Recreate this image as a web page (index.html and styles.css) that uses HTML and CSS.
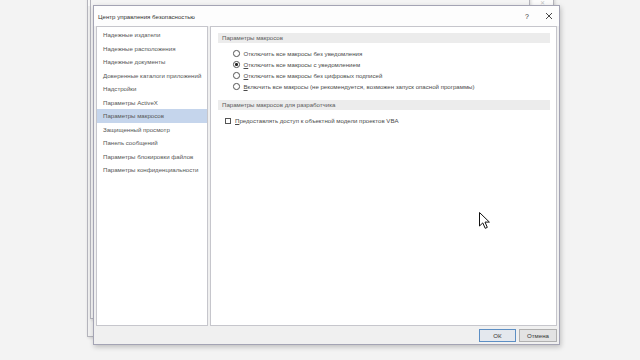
FILE: index.html
```html
<!DOCTYPE html>
<html lang="ru">

<head>
    <meta charset="UTF-8">
    <title>Центр управления безопасностью</title>
    <link rel="stylesheet" href="styles.css">
</head>

<body>
    <div class="desk">
        <!-- окна позади диалога -->
        <div class="win win-back1">
            <div class="win-title">
                <span class="win-name">Параметры Word</span>
                <span class="win-btns"><span>?</span><span>✕</span></span>
            </div>
        </div>
        <div class="win win-back2"></div>

        <div class="dialog">
            <div class="titlebar">
                <span class="title">Центр управления безопасностью</span>
                <span class="help">?</span>
                <span class="close">
                    <svg width="8" height="8" viewBox="0 0 8 8"><path d="M1 1 L7 7 M7 1 L1 7" stroke="#333" stroke-width="0.9" fill="none"/></svg>
                </span>
            </div>

            <div class="body">
                <ul class="nav">
                    <li>Надежные издатели</li>
                    <li>Надежные расположения</li>
                    <li>Надежные документы</li>
                    <li>Доверенные каталоги приложений</li>
                    <li>Надстройки</li>
                    <li>Параметры ActiveX</li>
                    <li class="active">Параметры макросов</li>
                    <li>Защищенный просмотр</li>
                    <li>Панель сообщений</li>
                    <li>Параметры блокировки файлов</li>
                    <li>Параметры конфиденциальности</li>
                </ul>

                <div class="pane">
                    <div class="group-head">Параметры макросов</div>
                    <div class="options">
                        <div class="opt"><span class="radio"></span>Отключить все макросы без уведомления</div>
                        <div class="opt"><span class="radio checked"></span><span><u>О</u>тключить все макросы с уведомлением</span></div>
                        <div class="opt"><span class="radio"></span><span><u>О</u>тключить все макросы без цифровых подписей</span></div>
                        <div class="opt"><span class="radio"></span><span><u>В</u>ключить все макросы (не рекомендуется, возможен запуск опасной программы)</span></div>
                    </div>

                    <div class="group-head group-dev">Параметры макросов для разработчика</div>
                    <div class="check-row"><span class="check"></span><span><u>П</u>редоставлять доступ к объектной модели проектов VBA</span></div>
                </div>
            </div>

            <div class="footer">
                <button class="btn btn-ok">ОК</button>
                <button class="btn">Отмена</button>
            </div>
        </div>

        <svg class="cursor" width="12" height="18" viewBox="0 0 12 18">
            <path d="M0.5 0.5 V14 L3.8 10.9 L6.2 16.3 L8.3 15.4 L6 10.1 H10.4 Z" fill="#fff" stroke="#111" stroke-width="1" stroke-linejoin="round"/>
        </svg>
    </div>
</body>

</html>
```

FILE: styles.css
```css
body {
    margin: 0;
    padding: 0;
    font-family: "Liberation Sans", Arial, sans-serif;
    background-color: #f3f3f3;
    color: #4a4a4a;
}

.desk {
    position: relative;
    width: 640px;
    height: 360px;
    overflow: hidden;
}

/* Окна позади */
.win {
    position: absolute;
    box-sizing: border-box;
    border: 1px solid #b4b4bc;
    background-color: #f0f0f0;
    box-shadow: 1px 1px 3px rgba(0, 0, 0, 0.15);
}

.win-back1 {
    left: 87px;
    top: -14px;
    width: 467px;
    height: 351px;
}

.win-back2 {
    left: 90px;
    top: -10px;
    width: 440px;
    height: 329px;
    background-color: #f4f4f4;
}

.win-title {
    height: 19px;
    background-color: #fbfbfb;
    display: flex;
    align-items: flex-end;
    justify-content: space-between;
    padding: 0 8px 0 30px;
    font-size: 6px;
    color: #c4c4c4;
}

.win-btns span {
    margin-left: 16px;
}

/* Диалог */
.dialog {
    position: absolute;
    left: 93px;
    top: 5px;
    width: 467px;
    height: 340px;
    box-sizing: border-box;
    border: 1px solid #a4a4b4;
    background-color: #f0f0f0;
    display: flex;
    flex-direction: column;
    box-shadow: 1px 2px 5px rgba(0, 0, 0, 0.22);
    z-index: 2;
}

.titlebar {
    height: 20px;
    flex-shrink: 0;
    background-color: #fdfdfd;
    display: flex;
    align-items: center;
    padding-left: 4px;
    font-size: 6.1px;
    color: #333;
}

.title {
    flex: 1;
}

.help {
    width: 8px;
    text-align: center;
    font-size: 7px;
    margin-right: 14px;
}

.close {
    width: 8px;
    height: 8px;
    margin-right: 6px;
    display: flex;
}

.body {
    flex: 1;
    display: flex;
    gap: 2px;
    padding: 0 2px;
    min-height: 0;
}

.nav {
    list-style: none;
    margin: 0;
    padding: 1px 0 0 0;
    width: 112px;
    box-sizing: border-box;
    border: 1px solid #c6c6cc;
    background-color: #fff;
    font-size: 6.1px;
    color: #555;
}

.nav li {
    height: 13.5px;
    line-height: 13.5px;
    padding-left: 6px;
    white-space: nowrap;
}

.nav li.active {
    background-color: #c5d5ec;
}

.pane {
    flex: 1;
    box-sizing: border-box;
    border: 1px solid #c6c6cc;
    background-color: #fff;
    padding: 6px 6px 0 7px;
    font-size: 6.1px;
}

.group-head {
    height: 10px;
    line-height: 10px;
    background-color: #ececec;
    padding-left: 4px;
    color: #5a5a5a;
}

.options {
    margin-top: 5px;
    padding-left: 15px;
}

.opt {
    height: 11px;
    display: flex;
    align-items: center;
    gap: 4px;
    white-space: nowrap;
}

.opt u,
.check-row u {
    text-decoration-thickness: 0.5px;
    text-underline-offset: 1px;
}

.radio {
    width: 6.5px;
    height: 6.5px;
    box-sizing: border-box;
    border: 1px solid #555;
    border-radius: 50%;
    display: flex;
    align-items: center;
    justify-content: center;
    flex-shrink: 0;
}

.radio.checked::after {
    content: "";
    width: 2.5px;
    height: 2.5px;
    border-radius: 50%;
    background-color: #222;
}

.group-dev {
    margin-top: 8px;
}

.check-row {
    margin-top: 5px;
    height: 11px;
    padding-left: 7px;
    display: flex;
    align-items: center;
    gap: 4px;
}

.check {
    width: 6px;
    height: 6px;
    box-sizing: border-box;
    border: 1px solid #555;
    flex-shrink: 0;
}

.footer {
    height: 18px;
    flex-shrink: 0;
    display: flex;
    justify-content: flex-end;
    align-items: center;
    gap: 3px;
    padding-right: 2px;
}

.btn {
    width: 38px;
    height: 13px;
    padding: 0;
    box-sizing: border-box;
    border: 1px solid #b0b0b0;
    background-color: #e3e3e3;
    font-family: "Liberation Sans", Arial, sans-serif;
    font-size: 6.1px;
    color: #333;
}

.btn-ok {
    width: 37px;
    border-color: #5d8fc4;
    background-color: #e4e8ee;
}

.cursor {
    position: absolute;
    left: 479px;
    top: 212px;
    z-index: 5;
}
```
